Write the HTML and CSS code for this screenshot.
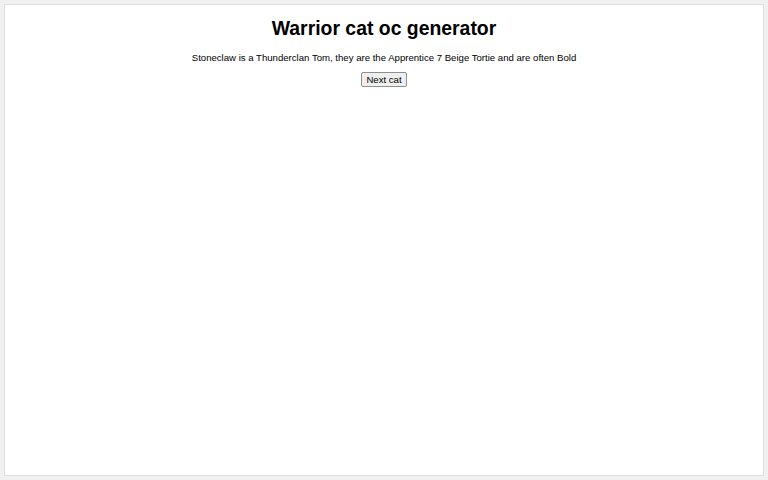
FILE: index.html
```html
<!DOCTYPE html>
<html lang="en">
<head>
  <meta charset="UTF-8" />
  <title>Warrior cat oc generator</title>
  <link rel="stylesheet" href="styles.css">
</head>
<body>
  <div class="frame">
    <h1>Warrior cat oc generator</h1>
    <p id="catText">Stoneclaw is a Thunderclan Tom, they are the Apprentice 7 Beige Tortie and are often Bold</p>
    <button onclick="nextCat()">Next cat</button>
  </div>

<script>
  const names = ['Stone', 'Fern', 'Ash', 'Thistle', 'Bramble', 'Sand'];
  const suffixes = ['claw', 'pelt', 'fur', 'whisker', 'tail', 'heart'];
  const clans = ['Thunderclan', 'Riverclan', 'Windclan', 'Shadowclan'];
  const genders = ['Tom', 'She-cat'];
  const ranks = ['Apprentice', 'Warrior', 'Medicine cat', 'Deputy'];
  const colours = ['Beige', 'Grey', 'Ginger', 'Black', 'White'];
  const patterns = ['Tortie', 'Tabby', 'Calico', 'Solid'];
  const traits = ['Bold', 'Shy', 'Loyal', 'Grumpy', 'Clever'];

  function pick(list) {
    return list[Math.floor(Math.random() * list.length)];
  }

  function nextCat() {
    const age = Math.floor(Math.random() * 12) + 1;
    document.getElementById('catText').innerText =
      pick(names) + pick(suffixes) + ' is a ' + pick(clans) + ' ' + pick(genders) +
      ', they are the ' + pick(ranks) + ' ' + age + ' ' + pick(colours) + ' ' +
      pick(patterns) + ' and are often ' + pick(traits);
  }
</script>
</body>
</html>
```
FILE: styles.css
```css
body {
  margin: 0;
  padding: 4px;
  background-color: #f0f0f0;
  font-family: "Liberation Sans", Arial, sans-serif;
  height: 480px;
  box-sizing: border-box;
}
.frame {
  background-color: white;
  border: 1px solid #dcdcdc;
  height: 100%;
  box-sizing: border-box;
  text-align: center;
  padding-top: 12px;
}
h1 {
  font-size: 19.4px;
  line-height: 22px;
  margin: 0 0 13px;
}
p {
  font-size: 9.6px;
  line-height: 11px;
  margin: 0 0 6px;
}
button {
  font-family: "Liberation Sans", Arial, sans-serif;
  font-size: 9.6px;
  height: 15px;
  padding: 0 4px;
  background-color: #efefef;
  border: 1px solid #8f8f8f;
  border-radius: 2px;
  color: black;
}
```
